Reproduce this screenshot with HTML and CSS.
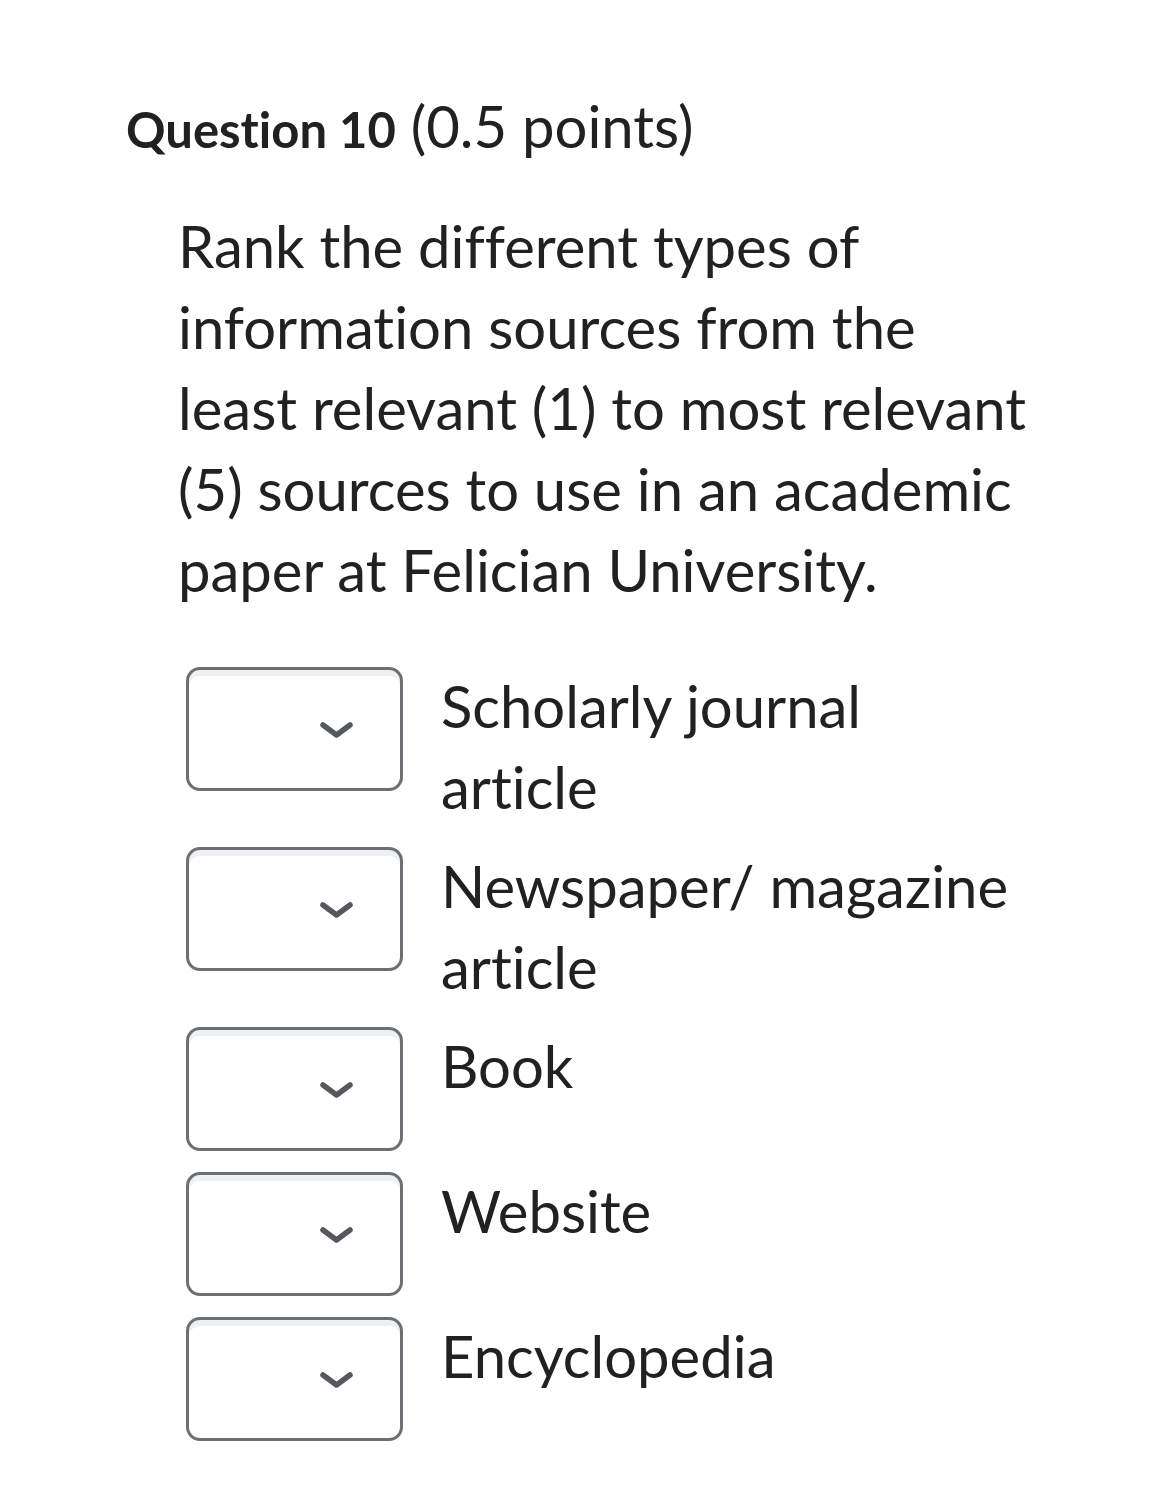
FILE: index.html
```html
<!DOCTYPE html>
<html>
<head>
<meta charset="utf-8">
<link rel="stylesheet" href="styles.css">
</head>
<body>
<div class="page">
  <h2 class="q-title"><span class="q-num">Question 10</span> <span class="q-pts">(0.5 points)</span></h2>
  <div class="q-body">
    <p class="q-text">Rank the different types of information sources from the least relevant (1) to most relevant (5) sources to use in an academic paper at Felician University.</p>
    <div class="rows">
      <div class="row">
        <div class="sel-wrap"><div class="sel"><svg class="chev" viewBox="0 0 33 16"><path d="M3 3 L16.5 13 L30 3"/></svg></div></div>
        <div class="opt">Scholarly journal article</div>
      </div>
      <div class="row">
        <div class="sel-wrap"><div class="sel"><svg class="chev" viewBox="0 0 33 16"><path d="M3 3 L16.5 13 L30 3"/></svg></div></div>
        <div class="opt"><span class="keep">Newspaper/ magazine</span> article</div>
      </div>
      <div class="row">
        <div class="sel-wrap"><div class="sel"><svg class="chev" viewBox="0 0 33 16"><path d="M3 3 L16.5 13 L30 3"/></svg></div></div>
        <div class="opt">Book</div>
      </div>
      <div class="row">
        <div class="sel-wrap"><div class="sel"><svg class="chev" viewBox="0 0 33 16"><path d="M3 3 L16.5 13 L30 3"/></svg></div></div>
        <div class="opt">Website</div>
      </div>
      <div class="row">
        <div class="sel-wrap"><div class="sel"><svg class="chev" viewBox="0 0 33 16"><path d="M3 3 L16.5 13 L30 3"/></svg></div></div>
        <div class="opt">Encyclopedia</div>
      </div>
    </div>
  </div>
</div>
</body>
</html>
```
FILE: styles.css
```css
html, body {
  margin: 0;
  padding: 0;
  background: #ffffff;
}
body {
  font-family: Lato, "Noto Sans", sans-serif;
  color: #202122;
  font-variant-ligatures: none;
}
.page {
  padding: 94px 0 0 126px;
}
.q-title {
  margin: 0;
  font-size: 58px;
  font-weight: normal;
  line-height: 64px;
}
.q-num {
  font-weight: 700;
  font-size: 49px;
}
.q-pts {
  font-weight: 400;
  font-size: 58px;
}
.q-body {
  padding-left: 52px;
  margin-top: 44px;
}
.q-text {
  margin: 0;
  width: 862px;
  font-size: 58px;
  line-height: 81px;
}
.rows {
  margin-top: 57px;
  display: flex;
  flex-direction: column;
  gap: 20px;
}
.row {
  display: flex;
  align-items: flex-start;
}
.sel-wrap {
  padding: 0 0 1px 8px;
}
.sel {
  box-sizing: border-box;
  width: 217px;
  height: 124px;
  border: 3px solid #6c6f73;
  border-radius: 14px;
  background: #ffffff;
  box-shadow: inset 0 6px 0 #eef0f2;
  display: flex;
  align-items: center;
  justify-content: flex-end;
  padding-right: 47px;
}
.chev {
  width: 33px;
  height: 16px;
  margin-top: 2px;
}
.chev path {
  fill: none;
  stroke: #55595d;
  stroke-width: 5.5;
  stroke-linecap: round;
  stroke-linejoin: round;
}
.opt {
  margin-left: 38px;
  width: 572px;
  font-size: 58px;
  line-height: 81px;
  margin-top: -2px;
}
.keep {
  white-space: nowrap;
}
```
